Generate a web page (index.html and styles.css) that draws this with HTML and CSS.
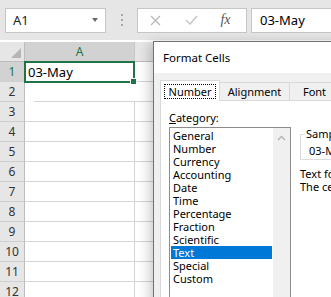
FILE: index.html
```html
<!DOCTYPE html>
<html lang="en">
<head>
  <meta charset="UTF-8" />
  <title>Format Cells</title>
  <link rel="stylesheet" href="styles.css">
</head>
<body>

<div class="formula-bar">
  <div class="name-box">
    <span>A1</span>
    <span class="caret"></span>
  </div>
  <div class="grip"><i></i><i></i><i></i></div>
  <div class="fx-buttons">
    <span class="btn">
      <svg width="11" height="11" viewBox="0 0 11 11"><path d="M1 1 L10 10 M10 1 L1 10" stroke="#b9b9b9" stroke-width="1.3" fill="none"/></svg>
    </span>
    <span class="btn">
      <svg width="13" height="10" viewBox="0 0 13 10"><path d="M1 5 L5 9 L12 1" stroke="#c4c4c4" stroke-width="1.4" fill="none"/></svg>
    </span>
    <span class="btn fx">fx</span>
  </div>
  <div class="formula-input">03-May</div>
</div>

<div class="sheet">
  <div class="corner"><span class="tri"></span></div>
  <div class="col-head active">A</div>
  <div class="col-head"></div>

  <div class="row-head active">1</div>
  <div class="cell selected">03-May</div>
  <div class="cell"></div>

  <div class="row-head">2</div>
  <div class="cell right">03-May</div>
  <div class="cell"></div>

  <div class="row-head">3</div><div class="cell"></div><div class="cell"></div>
  <div class="row-head">4</div><div class="cell"></div><div class="cell"></div>
  <div class="row-head">5</div><div class="cell"></div><div class="cell"></div>
  <div class="row-head">6</div><div class="cell"></div><div class="cell"></div>
  <div class="row-head">7</div><div class="cell"></div><div class="cell"></div>
  <div class="row-head">8</div><div class="cell"></div><div class="cell"></div>
  <div class="row-head">9</div><div class="cell"></div><div class="cell"></div>
  <div class="row-head">10</div><div class="cell"></div><div class="cell"></div>
  <div class="row-head">11</div><div class="cell"></div><div class="cell"></div>
  <div class="row-head">12</div><div class="cell"></div><div class="cell"></div>
</div>

<div class="dialog">
  <div class="dialog-title">Format Cells</div>
  <div class="dialog-body">
    <div class="tabs">
      <div class="tab current"><span class="focus">Number</span></div>
      <div class="tab">Alignment</div>
      <div class="tab wide">Font</div>
    </div>
    <div class="panel">
      <div class="left">
        <div class="label"><u>C</u>ategory:</div>
        <div class="listbox">
          <div class="items">
            <div class="item">General</div>
            <div class="item">Number</div>
            <div class="item">Currency</div>
            <div class="item">Accounting</div>
            <div class="item">Date</div>
            <div class="item">Time</div>
            <div class="item">Percentage</div>
            <div class="item">Fraction</div>
            <div class="item">Scientific</div>
            <div class="item picked">Text</div>
            <div class="item">Special</div>
            <div class="item">Custom</div>
          </div>
          <div class="scroll">
            <svg width="9" height="6" viewBox="0 0 9 6"><path d="M1 5 L4.5 1.5 L8 5" stroke="#b4b4b4" stroke-width="1.4" fill="none"/></svg>
          </div>
        </div>
      </div>
      <div class="right">
        <fieldset class="sample">
          <legend>Sample</legend>
          <div>03-May</div>
        </fieldset>
        <p class="desc">Text format cells are treated as text even when a number is in the cell.<br>The cell is displayed exactly as entered.</p>
      </div>
    </div>
  </div>
</div>

</body>
</html>
```

FILE: styles.css
```css
body { margin: 0; width: 331px; height: 297px; overflow: hidden; position: relative; background: #fff; font-family: 'Noto Sans', 'Liberation Sans', sans-serif; color: #000; }

/* formula bar */
.formula-bar { display: flex; align-items: center; height: 40px; background: #e6e6e6; }
.name-box { margin-left: 5px; width: 101px; height: 25px; box-sizing: border-box; border: 1px solid #c6c6c6; background: #fff; display: flex; align-items: center; justify-content: space-between; padding: 0 7px; font-size: 13px; color: #222; }
.caret { width: 0; height: 0; border-left: 3.5px solid transparent; border-right: 3.5px solid transparent; border-top: 4px solid #6a6a6a; }
.grip { margin-left: 15px; display: flex; flex-direction: column; gap: 3px; }
.grip i { display: block; width: 2px; height: 2px; background: #a8a8a8; }
.fx-buttons { margin-left: 14px; width: 110px; height: 25px; box-sizing: border-box; border: 1px solid #c6c6c6; background: #fff; display: flex; align-items: center; }
.btn { display: flex; justify-content: center; align-items: center; width: 35px; height: 100%; }
.btn + .btn { width: 36px; }
.btn.fx { width: 33px; font-family: 'Liberation Serif', serif; font-style: italic; font-size: 14px; color: #555; }
.formula-input { margin-left: 4px; flex: 1; height: 25px; box-sizing: border-box; border: 1px solid #c6c6c6; border-right: none; background: #fff; padding-left: 8px; font-size: 13px; line-height: 23px; }

/* grid */
.sheet { margin-top: 2px; display: grid; grid-template-columns: 25px 110px 1fr; grid-auto-rows: 20px; font-size: 13px; }
.sheet > div { box-sizing: border-box; }
.corner { background: #e6e6e6; border-right: 1px solid #bdbdbd; border-bottom: 1px solid #bdbdbd; position: relative; }
.tri { position: absolute; right: 3px; bottom: 3px; width: 0; height: 0; border-left: 10px solid transparent; border-bottom: 10px solid #b5b5b5; }
.col-head { background: #e6e6e6; border-right: 1px solid #c8c8c8; border-bottom: 1px solid #bdbdbd; text-align: center; line-height: 19px; font-size: 12px; color: #333; }
.col-head.active { background: #d2d2d2; color: #217346; border-bottom-color: #217346; }
.row-head { background: #e6e6e6; border-right: 1px solid #bdbdbd; border-bottom: 1px solid #cfcfcf; text-align: center; line-height: 20px; font-size: 12px; color: #333; }
.row-head.active { background: #d2d2d2; color: #217346; border-right-color: #217346; }
.cell { border-right: 1px solid #d4d4d4; border-bottom: 1px solid #d4d4d4; padding: 1px 3px 0 3px; line-height: 19px; white-space: nowrap; }
.cell.right { text-align: right; }
.cell.selected { position: relative; }
.cell.selected::after { content: ""; position: absolute; left: -1px; top: -1px; right: -1px; bottom: -2px; border: 2px solid #217346; }
.cell.selected::before { content: ""; position: absolute; right: -3px; bottom: -4px; width: 5px; height: 5px; background: #217346; border: 1px solid #fff; z-index: 1; }

/* dialog */
.dialog { position: absolute; left: 153px; top: 41px; width: 240px; height: 300px; border-left: 1px solid #707070; border-top: 1px solid #707070; background: #f0f0f0; box-shadow: -3px 2px 12px rgba(0,0,0,0.22); font-size: 11px; }
.dialog-title { background: #fff; height: 31px; line-height: 31px; padding-left: 9px; font-size: 11.5px; }
.dialog-body { padding: 7px 0 0 6px; }
.tabs { display: flex; align-items: flex-end; height: 20px; }
.tab { box-sizing: border-box; height: 18px; width: 70px; border-top: 1px solid #d9d9d9; border-right: 1px solid #d9d9d9; text-align: center; line-height: 17px; }
.tab.wide { width: 50px; }
.tab.current { position: relative; z-index: 1; width: 60px; height: 21px; margin-bottom: -1px; background: #fff; border: 1px solid #d9d9d9; border-bottom: none; padding-top: 2px; }
.focus { display: inline-block; border: 1px dotted #000; padding: 0 4px; line-height: 13px; }
.panel { display: flex; background: #fff; border: 1px solid #d9d9d9; height: 220px; padding: 10px 0 0 8px; }
.label { line-height: 14px; }
.listbox { margin-top: 2px; width: 122px; height: 180px; box-sizing: border-box; border: 1px solid #8c8c8c; display: flex; }
.items { flex: 1; padding: 1px; }
.item { line-height: 13px; padding-left: 2px; }
.item.picked { background: #0078d7; color: #fff; }
.scroll { width: 17px; background: #f0f0f0; display: flex; justify-content: center; padding-top: 7px; box-sizing: border-box; }
.scroll svg { display: block; }
.right { margin: 17px 0 0 9px; width: 200px; }
.sample { margin: 0; border: 1px solid #dcdcdc; padding: 4px 8px 1px 8px; }
.sample legend { margin-left: -4px; padding: 0 1px; line-height: 12px; }
.sample div { line-height: 14px; }
.desc { margin: 7px 0 0; line-height: 13px; white-space: nowrap; }
```
